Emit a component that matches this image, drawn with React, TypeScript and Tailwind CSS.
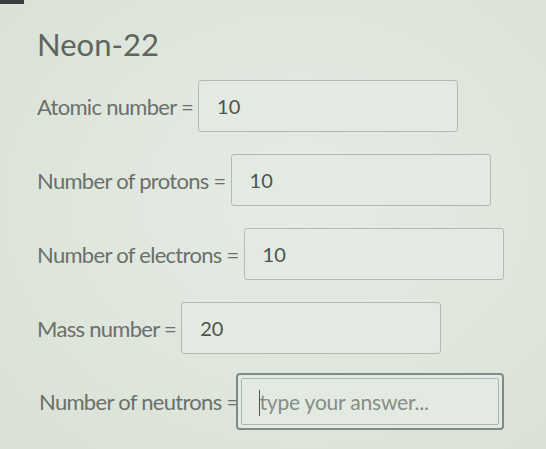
import React from "react";

interface Row {
  label: string;
  value?: string;
}

const rows: Row[] = [
  { label: "Atomic number =", value: "10" },
  { label: "Number of protons =", value: "10" },
  { label: "Number of electrons =", value: "10" },
  { label: "Mass number =", value: "20" },
];

function Field({ label, value }: Row) {
  return (
    <div className="flex items-center h-[52px]">
      <span className="text-[22px] tracking-[-0.7px] text-[#6b706b]">{label}</span>
      <div className="w-[260px] h-[52px] ml-[5px] flex items-center pl-[18px] border border-[#b3bab1] rounded-[3px] bg-[#e3eae1] text-[20px] text-[#4e524e]">
        {value}
      </div>
    </div>
  );
}

export default function App() {
  return (
    <div
      className="relative w-[546px] h-[449px] overflow-hidden bg-[radial-gradient(ellipse_at_55%_45%,#e6ece4,#d9e1d6)]"
      style={{ fontFamily: "Lato, 'Open Sans', sans-serif" }}
    >
      <div className="absolute left-0 top-0 w-[24px] h-[4px] bg-[#3a3d3a]" />
      <div className="pl-[37px] pt-[24px]">
        <h1 className="text-[31px] leading-[40px] text-[#5f645f]">Neon-22</h1>
        <div className="mt-[16px] flex flex-col gap-[22px]">
          {rows.map((r) => (
            <Field key={r.label} {...r} />
          ))}
          <div className="flex items-center h-[57px] pl-[2px] -mt-[3px]">
            <span className="text-[22px] tracking-[-0.7px] text-[#6b706b]">Number of neutrons =</span>
            <div className="w-[268px] h-[57px] -ml-[3px] p-[3px] border-2 border-[#7e8c88] rounded-[4px] bg-[#e3eae1]">
              <div className="relative h-full flex items-center pl-[18px] border border-[#aab7b2] rounded-[2px] text-[21px] tracking-[-0.2px] text-[#878c87]">
                <span className="absolute left-[17px] top-[11px] w-[1px] h-[26px] bg-[#555]" />
                type your answer...
              </div>
            </div>
          </div>
        </div>
      </div>
    </div>
  );
}
